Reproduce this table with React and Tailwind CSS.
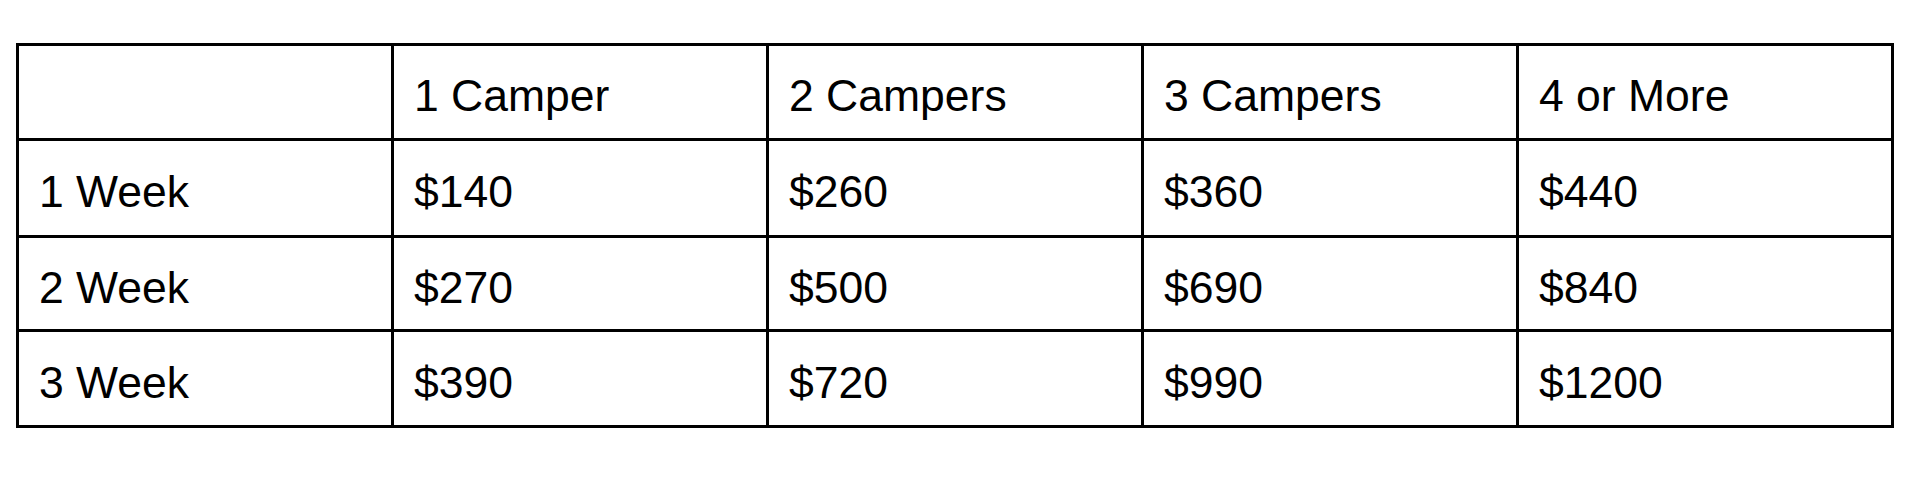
import React from "react";

const header = ["", "1 Camper", "2 Campers", "3 Campers", "4 or More"];
const rows = [
  ["1 Week", "$140", "$260", "$360", "$440"],
  ["2 Week", "$270", "$500", "$690", "$840"],
  ["3 Week", "$390", "$720", "$990", "$1200"],
];

export default function App() {
  const all = [header, ...rows];
  return (
    <div
      className="w-[1920px] h-[480px] bg-white pl-[16px] pt-[43px]"
      style={{ fontFamily: '"Liberation Sans", Arial, sans-serif' }}
    >
      <div className="inline-grid grid-cols-[repeat(5,372px)] grid-rows-[92px_94px_91px_93px] gap-[3px] p-[3px] bg-black">
        {all.map((r, i) =>
          r.map((c, j) => (
            <div
              key={i + "-" + j}
              className="bg-white flex items-center pl-[20px] pt-[8px] text-[44.5px] leading-[50px] text-black"
            >
              {c}
            </div>
          ))
        )}
      </div>
    </div>
  );
}
